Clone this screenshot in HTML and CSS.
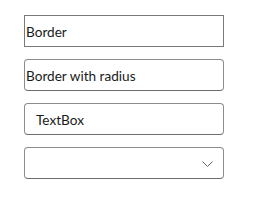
FILE: index.html
```html
<!DOCTYPE html>
<html lang="en">
<head>
    <meta charset="UTF-8">
    <title>Borders</title>
    <link rel="stylesheet" href="styles.css">
</head>
<body>
    <div class="panel">
        <div class="field plain">Border</div>
        <div class="field rounded">Border with radius</div>
        <div class="field rounded textbox">TextBox</div>
        <div class="field rounded combo">
            <svg class="chevron" width="11" height="6" viewBox="0 0 11 6">
                <path d="M0.5 0.5 L5.5 5.5 L10.5 0.5" fill="none" stroke="#606060" stroke-width="1"/>
            </svg>
        </div>
    </div>
</body>
</html>
```

FILE: styles.css
```css
body {
    margin: 0;
    background: #ffffff;
    font-family: Lato, "Noto Sans", sans-serif;
    font-size: 13.6px;
    color: #1a1a1a;
}
.panel {
    display: flex;
    flex-direction: column;
    gap: 12px;
    width: 200px;
    padding: 15px 0 0 24px;
}
.field {
    box-sizing: border-box;
    height: 32px;
    display: flex;
    align-items: center;
    padding-left: 1px;
    padding-top: 1px;
}
.plain {
    border: 1px solid #7a7a7a;
}
.rounded {
    border: 1px solid #8c8c8c;
    border-bottom-color: #6e6e6e;
    border-radius: 4px;
}
.textbox {
    padding-left: 11px;
}
.combo {
    justify-content: flex-end;
    padding-right: 10px;
}
.chevron {
    display: block;
}
```
